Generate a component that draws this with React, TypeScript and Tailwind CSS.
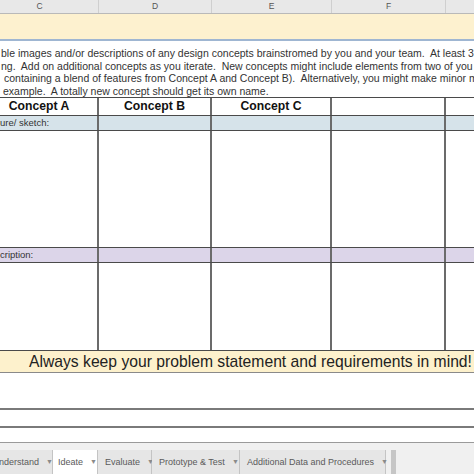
import React from 'react'

// column widths, first column starts off-screen (wrapper is shifted left)
const COLS = [118, 113, 120, 114, 110]
const LETTERS = ['C', 'D', 'E', 'F', 'G']

function GridRow({ height, bg, children, label }: { height: number; bg: string; children?: React.ReactNode[]; label?: string }) {
    return (
        <div className={`relative flex border-b border-[#4a4a4a] ${bg}`} style={{ height }}>
            {COLS.map((w, i) => (
                <div
                    key={i}
                    className="flex shrink-0 items-center justify-center border-r-2 border-[#6b6b6b]"
                    style={{ width: w }}
                >
                    {children?.[i]}
                </div>
            ))}
            {label && (
                <div className="absolute left-[19px] top-0 flex h-full items-center text-[9.5px] leading-none text-[#333]">
                    {label}
                </div>
            )}
        </div>
    )
}

const TABS = [
    { name: 'nderstand', w: 53, active: false },
    { name: 'Ideate', w: 45, active: true },
    { name: 'Evaluate', w: 54, active: false },
    { name: 'Prototype & Test', w: 88, active: false },
    { name: 'Additional Data and Procedures', w: 146, active: false },
]

export default function App() {
    return (
        <div className="h-[474px] w-[474px] overflow-hidden bg-white font-['Liberation_Sans',Arial,sans-serif] text-[#333]">
            {/* column letters */}
            <div className="-ml-[19px] flex h-[14px] border-b border-[#b9b9b9] bg-[#e8e8e8]">
                {COLS.map((w, i) => (
                    <div
                        key={i}
                        className="flex shrink-0 items-center justify-center border-r border-[#cfcfcf] text-[8.5px] text-[#555]"
                        style={{ width: w }}
                    >
                        {i < 4 ? LETTERS[i] : <span className="ml-[52px]">{LETTERS[i]}</span>}
                    </div>
                ))}
            </div>

            {/* yellow title band */}
            <div className="h-[27px] border-b-2 border-[#9fb6d2] bg-[#fdf1cf]" />

            {/* instructions */}
            <div className="h-[56px] pt-[6px] text-[10.5px] leading-[12.7px] whitespace-nowrap text-[#333]">
                <div className="pl-[1px]">ble images and/or descriptions of any design concepts brainstromed by you and your team.&nbsp; At least 3</div>
                <div className="pl-[1px]">ng.&nbsp; Add on additional concepts as you iterate.&nbsp; New concepts might include elements from two of you</div>
                <div className="pl-[4px]">containing a blend of features from Concept A and Concept B).&nbsp; Alternatively, you might make minor m</div>
                <div className="pl-[3px]">example.&nbsp; A totally new concept should get its own name.</div>
            </div>

            {/* concept table */}
            <div className="-ml-[19px] w-[575px] border-t border-[#4a4a4a]">
                <GridRow height={18} bg="bg-white">
                    {['Concept A', 'Concept B', 'Concept C', '', ''].map((t, i) => (
                        <span key={i} className="text-[12.2px] font-bold text-[#111]">{t}</span>
                    ))}
                </GridRow>
                <GridRow height={15} bg="bg-[#d6e3ea]" label="ure/ sketch:" />
                <GridRow height={117} bg="bg-white" />
                <GridRow height={15} bg="bg-[#dcd5e9]" label="cription:" />
                <GridRow height={88} bg="bg-white" />
            </div>

            {/* reminder */}
            <div className="flex h-[22px] items-center border-b border-[#8a8a8a] bg-[#fdf1cc] pl-[29px] text-[15.7px] leading-none whitespace-nowrap text-[#222]">
                Always keep your problem statement and requirements in mind!
            </div>

            <div className="h-[37px] border-b-2 border-[#7a7a7a]" />
            <div className="h-[18px] border-b-2 border-[#7a7a7a]" />
            <div className="h-[15px] border-b border-[#9a9a9a]" />

            {/* sheet tabs */}
            <div className="h-[40px] bg-[#f0f0f0] pt-[7px]">
                <div className="flex h-[25px]">
                    {TABS.map((t) => (
                        <div
                            key={t.name}
                            className={`flex shrink-0 items-center gap-[7px] border-r border-[#c4c4c4] text-[9px] whitespace-nowrap text-[#5a5a5a] ${
                                t.active ? 'bg-white pl-[5px]' : 'bg-[#e6e6e6] pl-[7px]'
                            }`}
                            style={{ width: t.w }}
                        >
                            <span className={t.name === 'nderstand' ? '-ml-[8px]' : ''}>{t.name}</span>
                            <span className="text-[7px] text-[#8a8a8a]">▼</span>
                        </div>
                    ))}
                    <div className="ml-[5px] w-[5px] bg-[#c6c6c6]" />
                    <div className="flex-1 bg-[#f0f0f0]" />
                </div>
            </div>
        </div>
    )
}
